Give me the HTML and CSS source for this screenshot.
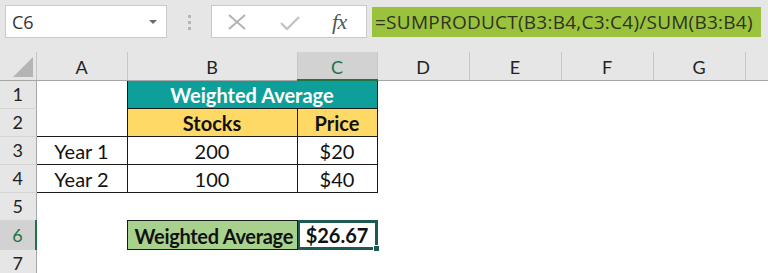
FILE: index.html
```html
<!DOCTYPE html>
<html>
<head>
<meta charset="utf-8">
<link rel="stylesheet" href="styles.css">
</head>
<body>
<div class="toolbar">
  <div class="namebox">
    <span class="name">C6</span>
    <svg class="caret" width="8" height="4" viewBox="0 0 8 4"><path d="M0 0h8L4 4z" fill="#6b6b6b"/></svg>
  </div>
  <div class="dots"><i></i><i></i><i></i></div>
  <div class="fxbox">
    <svg class="ic-x" width="20" height="16" viewBox="0 0 20 16"><path d="M2 1L18 15M18 1L2 15" stroke="#b3b3b3" stroke-width="2" fill="none"/></svg>
    <svg class="ic-check" width="20" height="14" viewBox="0 0 20 14"><path d="M1 7l6 6L19 1" stroke="#c4c4c4" stroke-width="2.4" fill="none"/></svg>
    <span class="fx">fx</span>
  </div>
  <div class="formula">=SUMPRODUCT(B3:B4,C3:C4)/SUM(B3:B4)</div>
</div>
<table class="sheet">
  <colgroup>
    <col class="w-rh"><col class="w-a"><col class="w-b"><col class="w-c"><col class="w-d"><col class="w-d"><col class="w-d"><col class="w-d"><col class="w-rest">
  </colgroup>
  <tr class="colhead">
    <th class="corner"><span class="tri"></span></th>
    <th>A</th><th>B</th><th class="sel">C</th><th>D</th><th>E</th><th>F</th><th>G</th><th class="last"></th>
  </tr>
  <tr>
    <th class="rh">1</th><td></td><td colspan="2" class="teal bx">Weighted Average</td><td></td><td></td><td></td><td></td><td></td>
  </tr>
  <tr>
    <th class="rh">2</th><td></td><td class="yellow bx bold">Stocks</td><td class="yellow bx bold">Price</td><td></td><td></td><td></td><td></td><td></td>
  </tr>
  <tr>
    <th class="rh">3</th><td class="bx">Year 1</td><td class="bx">200</td><td class="bx">$20</td><td></td><td></td><td></td><td></td><td></td>
  </tr>
  <tr>
    <th class="rh">4</th><td class="bx">Year 2</td><td class="bx">100</td><td class="bx">$40</td><td></td><td></td><td></td><td></td><td></td>
  </tr>
  <tr>
    <th class="rh">5</th><td></td><td></td><td></td><td></td><td></td><td></td><td></td><td></td>
  </tr>
  <tr>
    <th class="rh sel">6</th><td></td><td class="green bx bold left">Weighted Average</td><td class="active bold"><span class="cellwrap">$26.67</span></td><td></td><td></td><td></td><td></td><td></td>
  </tr>
  <tr>
    <th class="rh">7</th><td></td><td></td><td></td><td></td><td></td><td></td><td></td><td></td>
  </tr>
</table>
</body>
</html>
```

FILE: styles.css
```css
html, body {
  margin: 0;
  padding: 0;
  background: #ffffff;
  overflow: hidden;
}
body {
  width: 768px;
  height: 273px;
  font-family: "Lato", "Liberation Sans", sans-serif;
}
.toolbar {
  height: 52px;
  box-sizing: border-box;
  background: #e6e6e6;
  display: flex;
  align-items: flex-start;
  padding: 5px 0 0 5px;
}
.namebox {
  width: 162px;
  height: 33px;
  box-sizing: border-box;
  background: #ffffff;
  border: 1px solid #c9c9c9;
  display: flex;
  align-items: center;
  padding-left: 6px;
  font-family: "Open Sans", "Liberation Sans", sans-serif;
  font-size: 18px;
  color: #333333;
}
.caret {
  margin-left: auto;
  margin-right: 9px;
}
.dots {
  width: 44px;
  display: flex;
  flex-direction: column;
  align-items: center;
  gap: 3px;
  padding-top: 10px;
}
.dots i {
  display: block;
  width: 3px;
  height: 3px;
  background: #b5b5b5;
}
.fxbox {
  width: 156px;
  height: 33px;
  box-sizing: border-box;
  background: #ffffff;
  border: 1px solid #c9c9c9;
  display: flex;
  align-items: center;
}
.ic-x { margin-left: 15px; }
.ic-check { margin-left: 33px; margin-top: 3px; }
.fx {
  margin-left: 32px;
  font-family: "Liberation Serif", serif;
  font-style: italic;
  font-size: 22px;
  color: #555555;
  letter-spacing: -0.5px;
}
.formula {
  margin-left: 5px;
  margin-top: 2px;
  width: 389px;
  height: 30px;
  background: #9bc23d;
  font-family: "Open Sans", "Liberation Sans", sans-serif;
  font-size: 19px;
  letter-spacing: 0.25px;
  line-height: 30px;
  padding-left: 3px;
  box-sizing: border-box;
  color: #2e3324;
  white-space: nowrap;
  overflow: hidden;
}
.sheet {
  border-collapse: collapse;
  table-layout: fixed;
  width: 768px;
}
.w-rh { width: 36px; }
.w-a { width: 91px; }
.w-b { width: 170px; }
.w-c { width: 80px; }
.w-d { width: 92px; }
.w-rest { width: 23px; }
.sheet tr { height: 28px; }
.sheet th, .sheet td {
  padding: 0;
  height: 28px;
  box-sizing: border-box;
}
.colhead th {
  background: #e6e6e6;
  font-weight: normal;
  font-size: 18px;
  color: #222222;
  border-right: 1px solid #c6c6c6;
  border-bottom: 1px solid #a6a6a6;
  vertical-align: middle;
  padding-top: 2px;
}
.colhead th.last { border-right: none; }
.colhead th.sel {
  background: #d2d2d2;
  color: #217346;
  border-bottom: 2px solid #217346;
}
.tri {
  display: block;
  width: 0;
  height: 0;
  margin: 0 0 0 13px;
  border-style: solid;
  border-width: 0 0 20px 20px;
  border-color: transparent transparent #b4b4b4 transparent;
}
.rh {
  background: #e6e6e6;
  font-weight: normal;
  font-size: 18px;
  color: #222222;
  border-right: 1px solid #a6a6a6;
  border-bottom: 1px solid #d4d4d4;
  text-align: center;
  padding-top: 2px;
}
.rh.sel {
  background: #d2d2d2;
  color: #217346;
  border-right: 2px solid #217346;
}
.sheet td {
  font-size: 20px;
  color: #111111;
  text-align: center;
  vertical-align: middle;
  white-space: nowrap;
  padding-top: 2px;
}
.bx { border: 1px solid #1a1a1a; }
.bold { font-weight: bold; }
.teal {
  background: #0e9f9a;
  color: #ffffff !important;
  font-weight: bold;
}
.yellow { background: #ffd966; }
.green { background: #a9d18e; }
.sheet td.left {
  text-align: left;
  padding-left: 7px;
  letter-spacing: -0.3px;
}
.active {
  border: 1px solid #1f5a52;
  box-shadow: inset 0 0 0 2px #1f5a52;
  position: relative;
}
.sheet td.active { padding-top: 0; }
.cellwrap {
  display: block;
  position: relative;
  height: 100%;
  line-height: 28px;
}
.cellwrap::after {
  content: "";
  position: absolute;
  right: -3px;
  bottom: -3px;
  width: 5px;
  height: 5px;
  background: #1f5a52;
  border: 1px solid #ffffff;
}
```
